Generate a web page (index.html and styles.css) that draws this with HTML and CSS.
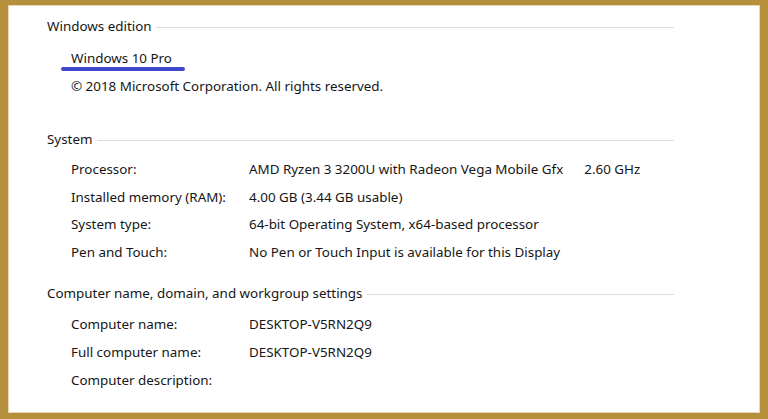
FILE: index.html
```html
<!DOCTYPE html>
<html lang="en">
<head>
<meta charset="utf-8">
<title>System</title>
<link rel="stylesheet" href="styles.css">
</head>
<body>
<div class="frame">
  <section class="sec sec-edition">
    <div class="sec-head"><span class="sec-title">Windows edition</span><span class="rule"></span></div>
    <div class="plain">
      <div class="line edition">Windows 10 Pro<span class="mark"></span></div>
      <div class="line">© 2018 Microsoft Corporation. All rights reserved.</div>
    </div>
  </section>

  <section class="sec sec-system">
    <div class="sec-head"><span class="sec-title">System</span><span class="rule"></span></div>
    <div class="grid">
      <div class="k">Processor:</div><div class="v">AMD Ryzen 3 3200U with Radeon Vega Mobile Gfx<span class="ghz">2.60 GHz</span></div>
      <div class="k">Installed memory (RAM):</div><div class="v">4.00 GB (3.44 GB usable)</div>
      <div class="k">System type:</div><div class="v">64-bit Operating System, x64-based processor</div>
      <div class="k">Pen and Touch:</div><div class="v">No Pen or Touch Input is available for this Display</div>
    </div>
  </section>

  <section class="sec sec-computer">
    <div class="sec-head"><span class="sec-title">Computer name, domain, and workgroup settings</span><span class="rule"></span></div>
    <div class="grid grid-computer">
      <div class="k">Computer name:</div><div class="v">DESKTOP-V5RN2Q9</div>
      <div class="k">Full computer name:</div><div class="v">DESKTOP-V5RN2Q9</div>
      <div class="k">Computer description:</div><div class="v"></div>
    </div>
  </section>
</div>
</body>
</html>
```

FILE: styles.css
```css
html, body {
  margin: 0;
  padding: 0;
  background: #b58f3c;
}

body {
  width: 768px;
  height: 419px;
  overflow: hidden;
  font-family: "Noto Sans", "Open Sans", sans-serif;
  font-size: 13.4px;
  color: #161616;
}

.frame {
  box-sizing: border-box;
  width: 768px;
  height: 419px;
  border-style: solid;
  border-color: #b58f3c;
  border-width: 5px 8px 6px 8px;
  background: #ffffff;
  box-shadow: inset 0 0 0 1px #e6d6b2;
  padding: 7px 86px 0 39px;
}

.sec-head {
  display: flex;
  align-items: center;
  gap: 4px;
  line-height: 28px;
  height: 28px;
}

.sec-title {
  white-space: nowrap;
}

.rule {
  flex: 1;
  height: 1px;
  background: #dcdcdc;
  margin-top: 3px;
}

.sec-system {
  margin-top: 25px;
}

.sec-computer {
  margin-top: 12px;
}

.plain {
  margin-top: 4px;
  padding-left: 24px;
}

.line {
  line-height: 28px;
  height: 28px;
  white-space: nowrap;
}

.edition {
  position: relative;
}

.mark {
  position: absolute;
  left: -10px;
  top: 23px;
  width: 124px;
  height: 4px;
  border-radius: 2px;
  background: #3f48cc;
}

.grid {
  margin-top: 3px;
  padding-left: 24px;
  display: grid;
  grid-template-columns: 178px 1fr;
  grid-auto-rows: 27.7px;
  line-height: 27.7px;
}

.grid-computer {
  grid-auto-rows: 28px;
  line-height: 28px;
}

.k, .v {
  white-space: nowrap;
}

.ghz {
  margin-left: 21px;
}
```
